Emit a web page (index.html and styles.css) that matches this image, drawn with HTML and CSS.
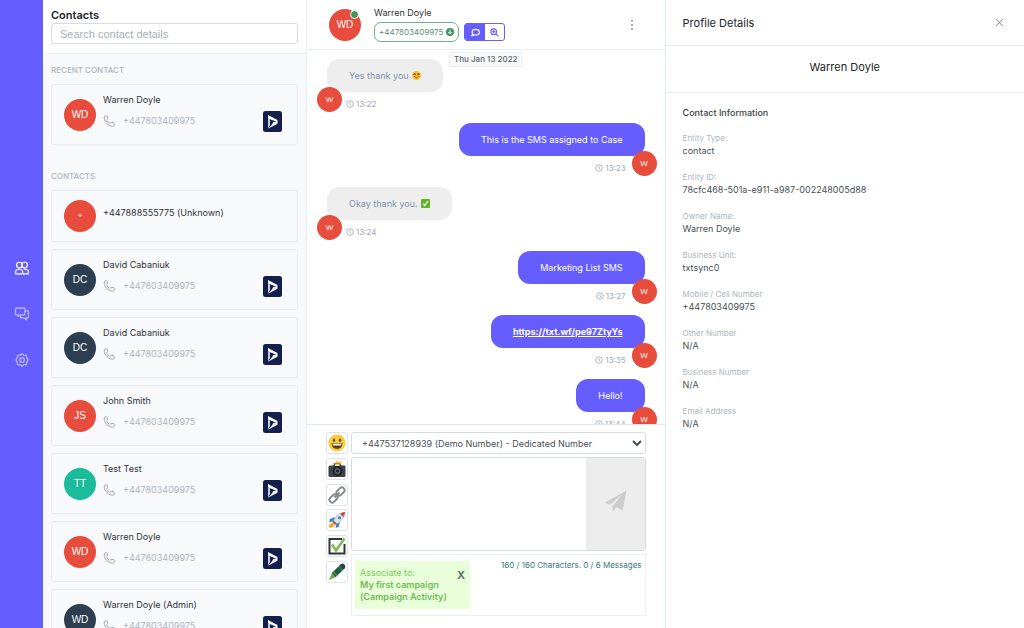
FILE: index.html
```html
<!DOCTYPE html>
<html lang="en">
<head>
<meta charset="utf-8">
<meta name="viewport" content="width=device-width, initial-scale=1">
<title>Contacts</title>
<link rel="stylesheet" href="styles.css">
</head>
<body>
<svg class="sprite" aria-hidden="true">
  <symbol id="i-phone" viewBox="0 0 24 24"><path d="M3 3.500 Q3 1.500 5 1.500 H7 Q9 1.500 9 3.500 V7 Q9 9 7.500 9.500 Q7 10 8 11.500 Q10 14.500 13 16.200 Q14.200 17 14.700 16 Q15.200 15 17 15 H20.500 Q22.500 15 22.500 17 V19.500 Q22.500 22.500 19 22.500 C10 22 3 14 2.500 6 Z" fill="none" stroke="currentColor" stroke-width="2" stroke-linejoin="round"/></symbol>
  <symbol id="i-dyn" viewBox="0 0 19 21"><rect width="19" height="21" rx="2.500" fill="#14204c"/><path d="M5 4 L14.500 9 V11.500 L10.500 9.500 L5 7.500 Z" fill="#fff"/><path d="M5 7.500 L7 8.300 V14 L5 17.500 Z" fill="#c6cbdc"/><path d="M14.500 11 V12.800 L5 17.800 L8.500 14 L10.500 10.800 Z" fill="#eef0f7"/></symbol>
  <symbol id="i-clock" viewBox="0 0 16 16"><circle cx="8" cy="8" r="6.600" fill="none" stroke="currentColor" stroke-width="1.700"/><path d="M8 3.800 V8.300 L10.500 10" fill="none" stroke="currentColor" stroke-width="1.700"/></symbol>
</svg>

<div class="app">
  <nav class="rail" aria-label="Main">
    <a class="rail-link active" href="#contacts" aria-label="Contacts">
      <svg viewBox="0 0 24 24"><circle cx="7.500" cy="7" r="4.800"/><circle cx="16.500" cy="7" r="4.800"/><path d="M1.200 22 V18 Q1.200 14.500 5 14.500 H9 Q13 14.500 13 18 V22 Z"/><path d="M15 14.500 H19 Q22.800 14.500 22.800 18 V22 H13"/></svg>
    </a>
    <a class="rail-link" href="#chats" aria-label="Chats">
      <svg viewBox="0 0 24 24"><path d="M2.500 2 H15.500 Q17 2 17 3.500 V12 Q17 13.500 15.500 13.500 H9 L5.500 16.500 V13.500 H2.500 Q1 13.500 1 12 V3.500 Q1 2 2.500 2 Z"/><path d="M17 6.500 H21.500 Q23 6.500 23 8 V17 Q23 18.500 21.500 18.500 H19.500 V22 L15.500 18.500 H9.500 V14"/></svg>
    </a>
    <a class="rail-link" href="#settings" aria-label="Settings">
      <svg viewBox="0 0 24 24"><path d="M12 1 L15 3.800 L19.500 3.800 L20 8.300 L23 12 L20 15.700 L19.500 20.200 L15 20.200 L12 23 L9 20.200 L4.500 20.200 L4 15.700 L1 12 L4 8.300 L4.500 3.800 L9 3.800 Z"/><circle cx="12" cy="12" r="4"/></svg>
    </a>
  </nav>

  <aside class="contacts">
    <header class="contacts-head">
      <h1><label for="search">Contacts</label></h1>
      <input id="search" type="search" placeholder="Search contact details">
    </header>
    <div class="contacts-body">
      <h2>Recent contact</h2>
      <ul class="cards">
        <li><a class="card" href="#c0"><span class="avatar red">WD</span><span class="who"><b>Warren Doyle</b><span class="tel"><svg><use href="#i-phone"/></svg>+447803409975</span></span><svg class="dyn"><use href="#i-dyn"/></svg></a></li>
      </ul>
      <h2>Contacts</h2>
      <ul class="cards">
        <li><a class="card short" href="#c1"><span class="avatar red plus">+</span><span class="who"><b>+447888555775 (Unknown)</b></span></a></li>
        <li><a class="card" href="#c2"><span class="avatar navy">DC</span><span class="who"><b>David Cabaniuk</b><span class="tel"><svg><use href="#i-phone"/></svg>+447803409975</span></span><svg class="dyn"><use href="#i-dyn"/></svg></a></li>
        <li><a class="card" href="#c3"><span class="avatar navy">DC</span><span class="who"><b>David Cabaniuk</b><span class="tel"><svg><use href="#i-phone"/></svg>+447803409975</span></span><svg class="dyn"><use href="#i-dyn"/></svg></a></li>
        <li><a class="card" href="#c4"><span class="avatar red">JS</span><span class="who"><b>John Smith</b><span class="tel"><svg><use href="#i-phone"/></svg>+447803409975</span></span><svg class="dyn"><use href="#i-dyn"/></svg></a></li>
        <li><a class="card" href="#c5"><span class="avatar teal">TT</span><span class="who"><b>Test Test</b><span class="tel"><svg><use href="#i-phone"/></svg>+447803409975</span></span><svg class="dyn"><use href="#i-dyn"/></svg></a></li>
        <li><a class="card" href="#c6"><span class="avatar red">WD</span><span class="who"><b>Warren Doyle</b><span class="tel"><svg><use href="#i-phone"/></svg>+447803409975</span></span><svg class="dyn"><use href="#i-dyn"/></svg></a></li>
        <li><a class="card" href="#c7"><span class="avatar navy">WD</span><span class="who"><b>Warren Doyle (Admin)</b><span class="tel"><svg><use href="#i-phone"/></svg>+447803409975</span></span><svg class="dyn"><use href="#i-dyn"/></svg></a></li>
      </ul>
    </div>
  </aside>

  <main class="chat">
    <header class="chat-head">
      <span class="avatar red online">WD</span>
      <div class="chat-id">
        <h2>Warren Doyle</h2>
        <div class="chat-tools">
          <button class="pill" type="button">+447803409975
            <svg viewBox="0 0 16 16"><circle cx="8" cy="8" r="8" fill="#3f9560"/><path d="M8 3.500 V12 M4.300 8.300 L8 12 L11.700 8.300" fill="none" stroke="#fff" stroke-width="2"/></svg>
          </button>
          <div class="toggle">
            <button class="on" type="button" aria-label="Messages"><svg viewBox="0 0 16 16"><path d="M8.500 2.500 C12.300 2.500 15 4.700 15 7.500 C15 10.300 12.300 12.500 8.500 12.500 C7.500 12.500 6.500 12.300 5.600 12 C4.500 13 3 13.500 1.300 13.500 C2.300 12.500 2.900 11.500 3 10.500 C2.300 9.600 2 8.600 2 7.500 C2 4.700 4.700 2.500 8.500 2.500 Z"/></svg></button>
            <button type="button" aria-label="Zoom in"><svg viewBox="0 0 16 16"><circle cx="6.500" cy="6.500" r="5"/><path d="M10.300 10.300 L15 15 M4 6.500 H9 M6.500 4 V9"/></svg></button>
          </div>
        </div>
      </div>
      <button class="more" type="button" aria-label="More"><svg viewBox="0 0 4 12"><circle cx="2" cy="2" r="1"/><circle cx="2" cy="6" r="1"/><circle cx="2" cy="10" r="1"/></svg></button>
    </header>

    <section class="thread" aria-label="Messages">
      <time class="day">Thu Jan 13 2022</time>
      <article class="msg"><p class="bubble">Yes thank you <svg class="emo" role="img" aria-label="smile" viewBox="0 0 16 16"><circle cx="8" cy="8" r="8" fill="#fbc02d"/><path d="M3 6.500 Q4.800 3 6.500 6.500 M9.500 6.500 Q11.200 3 13 6.500" stroke="#5b3a1e" stroke-width="1.800" fill="none"/><path d="M3.500 9 Q8 15 12.500 9" stroke="#7c4a12" stroke-width="1.600" fill="none"/></svg></p><div class="meta"><span class="avatar red small">W</span><time><svg><use href="#i-clock"/></svg>13:22</time></div></article>
      <article class="msg out"><p class="bubble">This is the SMS assigned to Case</p><div class="meta"><span class="avatar red small">W</span><time><svg><use href="#i-clock"/></svg>13:23</time></div></article>
      <article class="msg"><p class="bubble">Okay thank you. <svg class="emo" role="img" aria-label="check" viewBox="0 0 16 16"><rect width="16" height="16" rx="2" fill="#5fb324"/><path d="M3.500 8.500 L6.500 11.500 L12.500 4" stroke="#fff" stroke-width="2.200" fill="none"/></svg></p><div class="meta"><span class="avatar red small">W</span><time><svg><use href="#i-clock"/></svg>13:24</time></div></article>
      <article class="msg out"><p class="bubble">Marketing List SMS</p><div class="meta"><span class="avatar red small">W</span><time><svg><use href="#i-clock"/></svg>13:27</time></div></article>
      <article class="msg out"><p class="bubble"><a href="#link">https://txt.wf/pe97ZtyYs</a></p><div class="meta"><span class="avatar red small">W</span><time><svg><use href="#i-clock"/></svg>13:35</time></div></article>
      <article class="msg out"><p class="bubble">Hello!</p><div class="meta"><span class="avatar red small">W</span><time><svg><use href="#i-clock"/></svg>13:44</time></div></article>
    </section>

    <form class="composer">
      <div class="tools">
        <button type="button" aria-label="Emoji"><svg viewBox="0 0 18 18"><circle cx="9" cy="9" r="8.500" fill="#fcca32"/><ellipse cx="6" cy="6.300" rx="1.100" ry="1.700" fill="#5d3d1c"/><ellipse cx="12" cy="6.300" rx="1.100" ry="1.700" fill="#5d3d1c"/><path d="M3.500 9.300 H14.500 Q14 15 9 15 Q4 15 3.500 9.300 Z" fill="#5d3d1c"/><path d="M4.500 9.800 H13.500 L13 11.500 H5 Z" fill="#fff"/></svg></button>
        <button type="button" aria-label="Image"><svg viewBox="0 0 18 18"><path d="M9 0 L10.500 2 L13.500 1 L13.500 4 L6 5 L4.500 2.500 L7.500 2.500 Z" fill="#fbc94a"/><path d="M2 5.500 H5 L6.500 3.500 H12 L13.500 5.500 H16.500 Q17.500 5.500 17.500 7 V15.500 Q17.500 17 16 17 H2 Q0.500 17 0.500 15.500 V7 Q0.500 5.500 2 5.500 Z" fill="#3d4247"/><rect x="7" y="4" width="4.500" height="2" fill="#e7dba6"/><circle cx="9.500" cy="11" r="4.800" fill="#1c2024"/><circle cx="9.500" cy="11" r="3" fill="#59636b"/><circle cx="9.500" cy="11" r="1.500" fill="#1b2228"/></svg></button>
        <button type="button" aria-label="Link"><svg viewBox="0 0 18 18" fill="none" stroke="#85898c" stroke-width="1.900"><rect x="-4.500" y="-2.700" width="9" height="5.400" rx="2.500" transform="translate(5.500 12.500) rotate(-45)"/><rect x="-4.500" y="-2.700" width="9" height="5.400" rx="2.500" transform="translate(12.500 5.500) rotate(-45)"/><path d="M6.500 11.500 L11.500 6.500"/></svg></button>
        <button type="button" aria-label="Campaign"><svg viewBox="0 0 18 18"><path d="M7 6 L2 8 L1 11.500 L6 10 Z M12 11 L10.500 16 L7.500 17 L8.500 12 Z" fill="#2f86c9"/><path d="M17 1 Q10 2 5.500 9.500 L9 13 Q16.500 8 17 1 Z" fill="#d5e4ef" stroke="#8eabc0" stroke-width=".6"/><path d="M17 1 Q14.500 1.200 12 2.800 L15.300 6 Q16.800 3.500 17 1 Z" fill="#df3d43"/><circle cx="11.500" cy="6.800" r="1.500" fill="#3b7daf"/><path d="M5.500 9.500 L9 13 L7 13.800 L4.500 11.300 Z" fill="#cc3e3e"/><path d="M4.500 11.500 L0.800 14 L1.500 17 L4.500 16.500 L7 13.800 Z" fill="#f9a530"/></svg></button>
        <button type="button" aria-label="Task"><svg viewBox="0 0 18 18"><path d="M14 2 H1.500 V16.500 H16.500 V7" fill="none" stroke="#30353b" stroke-width="2"/><path d="M4 7.500 L8 13.500 L16.500 1.500" fill="none" stroke="#7dbb4c" stroke-width="2.600"/></svg></button>
        <button type="button" aria-label="Marker"><svg viewBox="0 0 18 18"><path d="M13 1 L17 5 L7.500 14.200 L3.800 10.300 Z" fill="#25766b"/><path d="M13 1 Q15 0 16.500 1.500 Q18 3 17 5 L15.300 6.600 L11.300 2.600 Z" fill="#36413f"/><path d="M10.200 4 L13.800 7.800 L7.500 14 L3.800 10.300 Z" fill="#275a42"/><path d="M3.800 10.300 L7.500 14.200 L1 17 Z" fill="#69ae45"/><path d="M5.500 9 L9 12.500" stroke="#8bc46a"/></svg></button>
      </div>
      <div class="fields">
        <select aria-label="Send from"><option>+447537128939 (Demo Number) - Dedicated Number</option></select>
        <div class="entry">
          <textarea aria-label="Message"></textarea>
          <button type="submit" aria-label="Send"><svg viewBox="0 0 24 24"><path d="M23.500 0.500 L0.800 13.300 L6 15.500 L18.500 5 L9 16.800 V23.500 L12.500 18.200 L19.500 21 Z"/></svg></button>
        </div>
        <div class="foot">
          <div class="assoc">
            <p>Associate to:<br><strong>My first campaign<br>(Campaign Activity)</strong></p>
            <button type="button">X</button>
          </div>
          <p class="count">160 / 160 Characters. 0 / 6 Messages</p>
        </div>
      </div>
    </form>
  </main>

  <aside class="profile">
    <header class="profile-head">
      <h2>Profile Details</h2>
      <button type="button" aria-label="Close"><svg viewBox="0 0 10 10"><path d="M1 1 L9 9 M9 1 L1 9"/></svg></button>
    </header>
    <h3 class="profile-name">Warren Doyle</h3>
    <section class="profile-info">
      <h4>Contact Information</h4>
      <dl>
        <div><dt>Entity Type:</dt><dd>contact</dd></div>
        <div><dt>Entity ID:</dt><dd>78cfc468-501a-e911-a987-002248005d88</dd></div>
        <div><dt>Owner Name:</dt><dd>Warren Doyle</dd></div>
        <div><dt>Business Unit:</dt><dd>txtsync0</dd></div>
        <div><dt>Mobile / Cell Number</dt><dd>+447803409975</dd></div>
        <div><dt>Other Number</dt><dd>N/A</dd></div>
        <div><dt>Business Number</dt><dd>N/A</dd></div>
        <div><dt>Email Address</dt><dd>N/A</dd></div>
      </dl>
    </section>
  </aside>
</div>
</body>
</html>
```
FILE: styles.css
```css
* { box-sizing: border-box; }
body, h1, h2, h3, h4, p, ul, dl, dd { margin: 0; padding: 0; }
body { font: 400 9px/12px Inter, "Noto Sans", sans-serif; color: #495057; background: #fff; }
button, input, select, textarea { font: inherit; color: inherit; margin: 0; }
button { background: none; border: 0; padding: 0; cursor: pointer; }
a { color: inherit; text-decoration: none; }
ul { list-style: none; }
svg { display: block; flex: none; }
.sprite { position: absolute; width: 0; height: 0; }

.app { display: grid; grid-template-columns: 43px 264px minmax(0, 1fr) 35.1%; height: 100vh; overflow: hidden; }

.rail { background: #665dfe; display: flex; flex-direction: column; justify-content: center; align-items: center; gap: 32px; }
.rail-link { color: #c0bcff; }
.rail-link.active { color: #fff; }
.rail-link svg { width: 14px; height: 14px; fill: none; stroke: currentColor; stroke-width: 2; stroke-linejoin: round; }

.avatar { display: flex; align-items: center; justify-content: center; flex: none; width: 32px; height: 32px; border-radius: 50%; color: #fff; font-family: "Liberation Sans", Arial, sans-serif; font-size: 10px; }
.avatar.plus { font-size: 8px; }
.avatar.small { width: 25px; height: 25px; font-size: 8px; }
.red { background: #e74c3c; }
.navy { background: #2c3e50; }
.teal { background: #1abc9c; }

.contacts { display: flex; flex-direction: column; min-height: 0; background: #f8f9fb; border-right: 1px solid #e9eef2; }
.contacts-head { background: #fff; padding: 7px 8px 9px; border-bottom: 1px solid #edf1f4; }
.contacts-head h1 { font-size: 11px; line-height: 16px; font-weight: 600; color: #212529; }
.contacts-head input { display: block; width: 100%; height: 21px; padding: 0 8px; border: 1px solid #d5dde3; border-radius: 3px; background: #fff; font-family: "Liberation Sans", Arial, sans-serif; font-size: 11px; appearance: none; }
.contacts-head input::placeholder { color: #a9afb5; opacity: 1; }
.contacts-body { flex: 1; min-height: 0; overflow: hidden; padding: 10px 8px 0; }
.contacts-body h2 { font-size: 8px; line-height: 12px; font-weight: 500; color: #adb5bd; text-transform: uppercase; margin-bottom: 8px; }
.cards { display: flex; flex-direction: column; gap: 7px; margin-bottom: 25px; }
.card { display: flex; align-items: center; gap: 7px; height: 61px; padding: 0 15px 0 12px; border: 1px solid #e9eef3; border-radius: 3px; }
.card.short { height: 52px; }
.who { flex: 1; display: flex; flex-direction: column; gap: 9px; align-self: flex-start; padding-top: 9px; }
.short .who { padding-top: 16px; }
.who b { font-weight: 400; color: #2f343a; }
.tel { display: flex; align-items: center; gap: 8px; color: #adb5bd; }
.tel svg { width: 12px; height: 12px; color: #9ea7af; }
.dyn { width: 19px; height: 21px; align-self: flex-end; margin-bottom: 12px; }

.chat { display: flex; flex-direction: column; min-width: 0; min-height: 0; }
.chat-head { display: flex; align-items: center; gap: 13px; height: 50px; padding: 0 31px 0 22px; border-bottom: 1px solid #e9eef2; }
.online { position: relative; }
.online::after { content: ""; position: absolute; top: 1px; right: 2px; width: 7px; height: 7px; border-radius: 50%; background: #3f9560; border: 1px solid #fff; }
.chat-id { flex: 1; display: flex; flex-direction: column; gap: 3px; }
.chat-id h2 { font-size: 9px; line-height: 12px; font-weight: 400; color: #2f343a; }
.chat-tools { display: flex; align-items: center; gap: 5px; }
.pill { display: flex; align-items: center; gap: 3px; height: 20px; padding: 0 4px; border: 1px solid #6fb08a; border-radius: 7px; color: #5a8f72; font-size: 8px; }
.pill svg { width: 8px; height: 8px; }
.toggle { display: flex; width: 41px; height: 18px; border: 1px solid #665dfe; border-radius: 3px; overflow: hidden; color: #665dfe; }
.toggle button { flex: 1; display: flex; align-items: center; justify-content: center; }
.toggle .on { background: #665dfe; color: #fff; }
.toggle svg { width: 9px; height: 9px; fill: none; stroke: currentColor; stroke-width: 2; }
.more svg { width: 4px; height: 12px; fill: #8d949b; }

.thread { position: relative; flex: 1; min-height: 0; overflow: hidden; display: flex; flex-direction: column; gap: 11px; padding: 9px 8px 0 10px; }
.day { position: absolute; top: 2px; left: 50%; transform: translateX(-50%); z-index: 2; padding: 0 4px; border: 1px solid #e9eef3; background: #f8f9fb; color: #5b646c; font-size: 8px; line-height: 13px; font-weight: 500; white-space: nowrap; }
.msg { flex: none; display: flex; flex-direction: column; align-items: flex-start; }
.bubble { display: flex; align-items: center; gap: 3px; height: 33px; margin: 0 12px 0 10px; padding: 0 22px; border-radius: 12px; background: #eee; color: #8094ae; }
.emo { width: 9px; height: 9px; }
.meta { display: flex; gap: 4px; margin-top: -5px; }
.meta time { display: flex; align-items: center; gap: 2px; padding-top: 9px; color: #a3abb3; font-size: 8px; }
.meta time svg { width: 8px; height: 8px; }
.out { align-items: flex-end; }
.out .bubble { background: #665dfe; color: #fff; }
.out .bubble a { font-weight: 700; text-decoration: underline; }
.out .meta { flex-direction: row-reverse; gap: 6px; }

.composer { flex: none; display: flex; align-items: flex-start; gap: 3px; padding: 7px 19px 12px; border-top: 1px solid #e2e9ee; }
.tools { display: flex; flex-direction: column; justify-content: space-between; height: 151px; }
.tools button { display: flex; align-items: center; justify-content: center; width: 22px; height: 22px; border: 1px solid #dde3e8; border-radius: 3px; }
.tools svg { width: 18px; height: 18px; }
.fields { flex: 1; min-width: 0; display: flex; flex-direction: column; gap: 3px; }
.fields select { width: 100%; height: 22px; padding: 0 0 0 6px; border: 1px solid #d5dde3; border-radius: 3px; background: #fff; }
.entry { display: flex; height: 94px; border: 1px solid #d5dde3; border-radius: 3px; overflow: hidden; }
.entry textarea { flex: 1; min-width: 0; border: 0; padding: 6px; resize: none; outline: 0; }
.entry button { width: 59px; display: flex; align-items: center; justify-content: center; background: #ececec; }
.entry button svg { width: 23px; height: 23px; fill: #cdcdcd; margin-bottom: 6px; }
.foot { display: flex; justify-content: space-between; align-items: flex-start; min-height: 62px; padding: 6px 3px; border: 1px solid #eceff2; }
.assoc { display: flex; justify-content: space-between; width: 115px; padding: 6px 5px; background: #e8ffda; color: #7fc862; }
.assoc strong { font-weight: 600; color: #74b957; }
.assoc button { align-self: flex-start; font: 700 11px/16px Inter, sans-serif; color: #667064; }
.assoc p { white-space: nowrap; }
.count { color: #37757b; font-size: 8px; line-height: 8px; }

.profile { border-left: 1px solid #e2ebef; min-width: 0; }
.profile-head { display: flex; align-items: center; justify-content: space-between; height: 46px; padding: 0 20px 0 17px; border-bottom: 1px solid #e6edf1; }
.profile-head h2, .profile-name { font-size: 11px; line-height: 16px; font-weight: 400; color: #212529; }
.profile-head svg { width: 9px; height: 9px; fill: none; stroke: #a2a8ad; stroke-width: 1.2; }
.profile-name { text-align: center; padding: 13px 0 17px; border-bottom: 1px solid #e6edf1; }
.profile-info { padding: 14px 17px; }
.profile-info h4 { font-size: 9px; line-height: 12px; font-weight: 500; color: #3a3f45; margin-bottom: 13px; }
.profile-info dl { display: flex; flex-direction: column; gap: 14px; }
.profile-info dt { font-size: 8px; line-height: 12px; color: #adb5bd; }
.profile-info dd { line-height: 13px; }
```
